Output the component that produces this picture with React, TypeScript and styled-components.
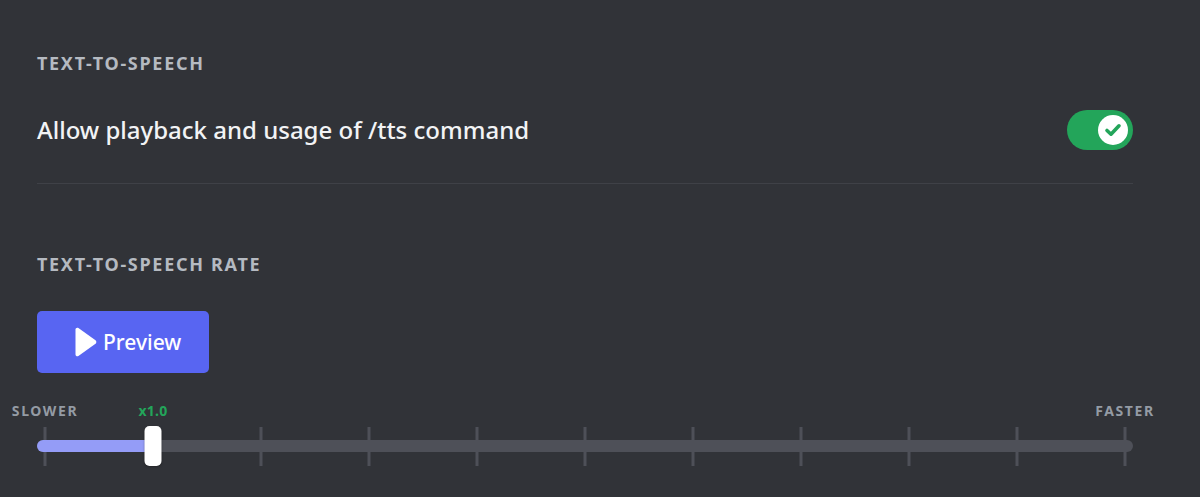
import React from "react";
import styled, { createGlobalStyle } from "styled-components";

const GlobalStyle = createGlobalStyle`
  html, body {
    margin: 0;
    padding: 0;
    background: #313338;
  }
  body {
    font-family: "Noto Sans", "Open Sans", sans-serif;
    -webkit-font-smoothing: antialiased;
  }
`;

const Page = styled.div`
  width: 1200px;
  height: 497px;
  box-sizing: border-box;
  padding: 51px 67px 0 37px;
  background: #313338;
  overflow: hidden;
`;

const SectionHeader = styled.h2<{ $gap: number }>`
  margin: 0 0 ${(p) => p.$gap}px 0;
  font-size: 18px;
  line-height: 24px;
  font-weight: 700;
  text-transform: uppercase;
  color: #b5bac1;
  letter-spacing: 1.7px;
`;

const Row = styled.div`
  display: flex;
  align-items: center;
  justify-content: space-between;
  height: 40px;
`;

const Label = styled.span`
  font-size: 24px;
  line-height: 32px;
  font-weight: 500;
  color: #f2f3f5;
`;

const Toggle = styled.div`
  width: 66px;
  height: 40px;
  border-radius: 20px;
  background: #23a55a;
  display: flex;
  align-items: center;
  justify-content: flex-end;
  padding: 0 5px;
  box-sizing: border-box;
`;

const Knob = styled.div`
  width: 30px;
  height: 30px;
  border-radius: 50%;
  background: #ffffff;
  display: flex;
  align-items: center;
  justify-content: center;
`;

const Divider = styled.div`
  height: 1px;
  background: #3f4147;
  margin: 33px 0 68px 0;
`;

const PreviewButton = styled.button`
  width: 172px;
  height: 62px;
  border: none;
  border-radius: 5px;
  background: #5865f2;
  color: #ffffff;
  display: flex;
  align-items: center;
  gap: 5px;
  padding: 0 0 0 35px;
  box-sizing: border-box;
  font-family: "Noto Sans", "Open Sans", sans-serif;
  font-size: 21px;
  font-weight: 500;
  cursor: pointer;
`;

const SliderBlock = styled.div`
  margin-top: 29px;
  display: flex;
  flex-direction: column;
  gap: 6px;
`;

const MarkLabels = styled.div`
  position: relative;
  height: 18px;
  margin: 0 8px;
`;

const MarkLabel = styled.span<{ $active?: boolean }>`
  position: absolute;
  top: 0;
  transform: translateX(-50%);
  font-size: 14px;
  line-height: 18px;
  font-weight: 700;
  white-space: nowrap;
  letter-spacing: ${(p) => (p.$active ? "0.3px" : "1.6px")};
  text-transform: ${(p) => (p.$active ? "none" : "uppercase")};
  color: ${(p) => (p.$active ? "#23a55a" : "#949ba4")};
`;

const SliderArea = styled.div`
  position: relative;
  height: 40px;
  display: flex;
  align-items: center;
`;

const Ticks = styled.div`
  position: absolute;
  left: 8px;
  right: 8px;
  top: 1px;
  bottom: 0;
`;

const Tick = styled.div`
  position: absolute;
  top: 0;
  width: 3px;
  height: 39px;
  transform: translateX(-50%);
  background: #4e5058;
`;

const Track = styled.div`
  position: relative;
  width: 100%;
  height: 12px;
  border-radius: 6px;
  background: #4e5058;
  overflow: hidden;
`;

const Fill = styled.div`
  height: 100%;
  background: #949cf7;
`;

const Grabber = styled.div`
  position: absolute;
  top: 0;
  width: 17px;
  height: 40px;
  border-radius: 5px;
  background: #ffffff;
  transform: translateX(-50%);
  box-shadow: 0 1px 2px rgba(0, 0, 0, 0.25);
`;

const marks = Array.from({ length: 11 }, (_, i) => i);
const activeIndex = 1;
const markLabels: { index: number; text: string }[] = [
  { index: 0, text: "Slower" },
  { index: 1, text: "x1.0" },
  { index: 10, text: "Faster" },
];

export default function App() {
  const trackWidth = 1096;
  const inset = 8;
  const markSpan = trackWidth - inset * 2;
  const valueX = inset + (markSpan * activeIndex) / 10;

  return (
    <>
      <GlobalStyle />
      <Page>
        <SectionHeader $gap={35}>Text-to-Speech</SectionHeader>
        <Row>
          <Label>Allow playback and usage of /tts command</Label>
          <Toggle>
            <Knob>
              <svg width="22" height="22" viewBox="0 0 22 22" fill="none">
                <path
                  d="M5 11.5 L9 15.2 L17 6.8"
                  stroke="#23a55a"
                  strokeWidth="3.6"
                  strokeLinecap="round"
                  strokeLinejoin="round"
                />
              </svg>
            </Knob>
          </Toggle>
        </Row>
        <Divider />
        <SectionHeader $gap={35}>Text-to-Speech Rate</SectionHeader>
        <PreviewButton>
          <svg width="26" height="31" viewBox="0 0 25 31">
            <path
              d="M3 2.5 C3 1 4.6 0.2 5.9 1 L23 13.3 C24.1 14.1 24.1 15.9 23 16.7 L5.9 29 C4.6 29.8 3 29 3 27.5 Z"
              fill="#ffffff"
            />
          </svg>
          Preview
        </PreviewButton>
        <SliderBlock>
          <MarkLabels>
            {markLabels.map((m) => (
              <MarkLabel
                key={m.index}
                $active={m.index === activeIndex}
                style={{ left: `${m.index * 10}%` }}
              >
                {m.text}
              </MarkLabel>
            ))}
          </MarkLabels>
          <SliderArea>
            <Ticks>
              {marks.map((i) => (
                <Tick key={i} style={{ left: `${i * 10}%` }} />
              ))}
            </Ticks>
            <Track>
              <Fill style={{ width: `${valueX}px` }} />
            </Track>
            <Grabber style={{ left: `${valueX}px` }} />
          </SliderArea>
        </SliderBlock>
      </Page>
    </>
  );
}
